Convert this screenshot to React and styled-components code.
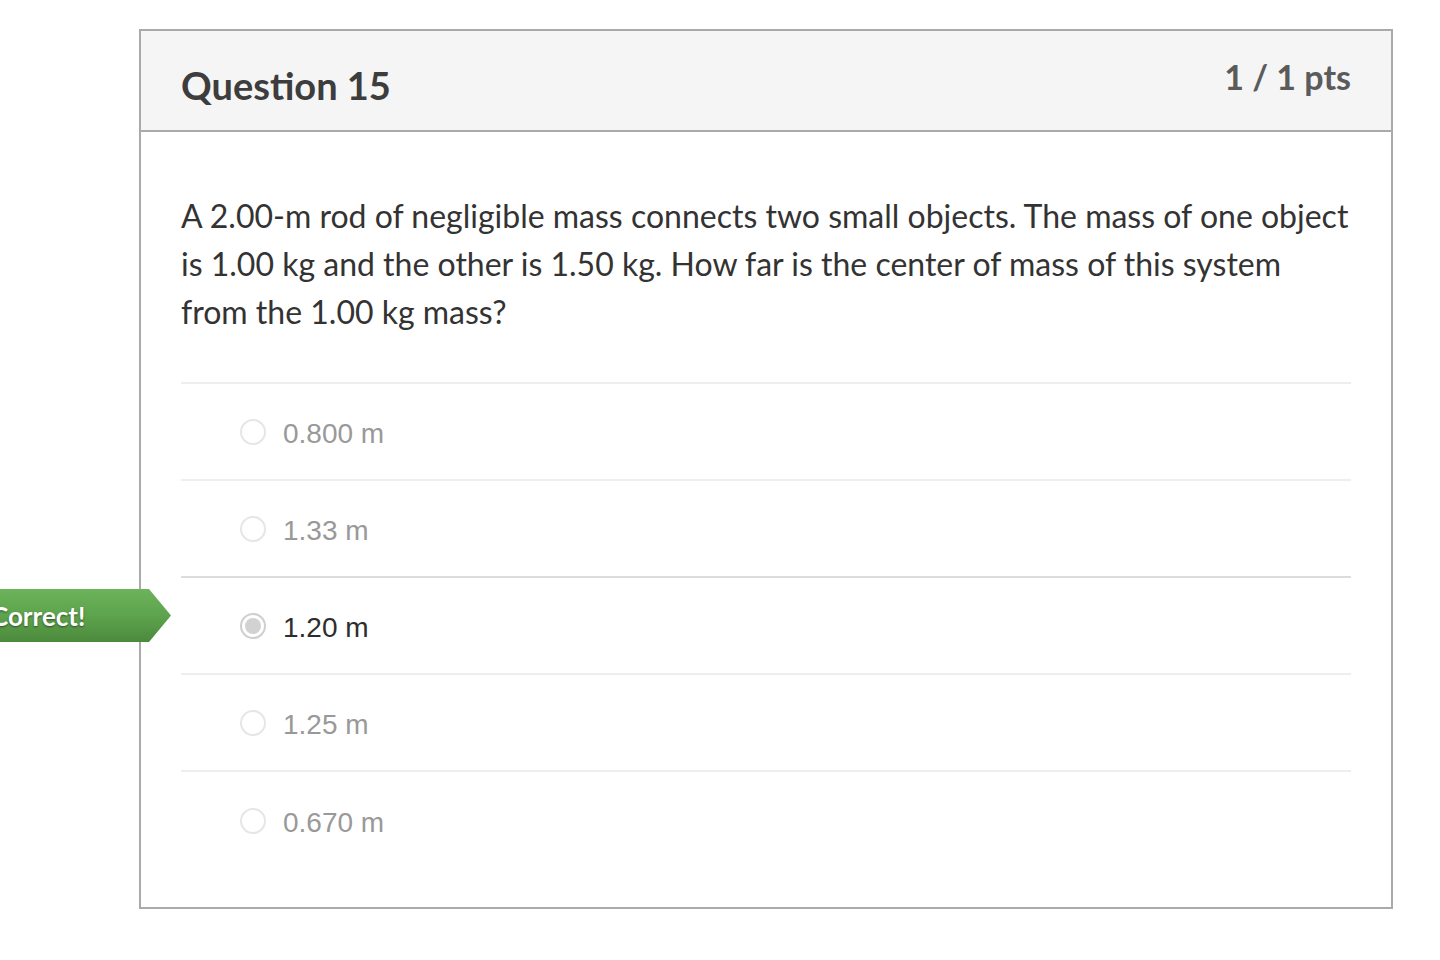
import React from 'react';
import styled, { createGlobalStyle } from 'styled-components';

const GlobalStyle = createGlobalStyle`
  body {
    margin: 0;
    padding: 0;
    background: #fff;
    font-family: Lato, "Noto Sans", sans-serif;
  }
  h1, h2, p {
    margin: 0;
    padding: 0;
  }
`;

const Page = styled.div`
  padding: 29px 0 40px 139px;
  width: 1254px;
`;

const Card = styled.div`
  border: 2px solid #aaaaaa;
  background: #fff;
`;

const Header = styled.div`
  display: flex;
  justify-content: space-between;
  align-items: flex-start;
  background: #f5f5f5;
  border-bottom: 2px solid #aaaaaa;
  padding: 0 40px 0 40px;
  height: 99px;
`;

const Title = styled.h1`
  font-family: Lato, sans-serif;
  font-weight: 700;
  font-size: 38px;
  color: #3d3d3d;
  margin-top: 30px;
  line-height: 48px;
`;

const Points = styled.h2`
  font-family: Lato, sans-serif;
  font-weight: 700;
  font-size: 34px;
  color: #5b5b5b;
  margin-top: 26px;
  line-height: 40px;
`;

const Body = styled.div`
  padding: 60px 40px 38px 40px;
`;

const Text = styled.p`
  font-family: Lato, sans-serif;
  font-size: 32px;
  line-height: 48px;
  color: #333;
  margin-bottom: 46px;
`;

const Answer = styled.div`
  position: relative;
  display: flex;
  align-items: center;
  height: 95px;
  border-top: 2px solid ${p => (p.$dark ? '#dcdcdc' : '#eeeeee')};
  padding-left: 59px;
  gap: 17px;
`;

const Last = styled(Answer)`
  height: 97px;
  border-top: 2px solid #eeeeee;
`;

const Radio = styled.span`
  box-sizing: border-box;
  width: 26px;
  height: 26px;
  border-radius: 50%;
  border: 2px solid ${p => (p.$checked ? '#cfcfcf' : '#e6e6e6')};
  background: #fff;
  display: flex;
  align-items: center;
  justify-content: center;
  &::after {
    content: '';
    display: ${p => (p.$checked ? 'block' : 'none')};
    width: 16px;
    height: 16px;
    border-radius: 50%;
    background: #d2d2d2;
  }
`;

const Label = styled.span`
  font-family: "Liberation Sans", Arial, sans-serif;
  font-size: 28px;
  color: ${p => (p.$checked ? '#2d2d2d' : '#999999')};
  margin-top: 4px;
`;

const Badge = styled.div`
  position: absolute;
  top: 11px;
  right: calc(100% + 10px);
  width: 180px;
  height: 53px;
  box-sizing: border-box;
  padding-left: 0;
  display: flex;
  align-items: center;
  background: linear-gradient(to bottom, #6cb35b 0%, #5ea34d 50%, #4b8a3c 100%);
  clip-path: polygon(0 0, 158px 0, 180px 50%, 158px 100%, 0 100%);
  color: #fff;
  font-family: Lato, sans-serif;
  font-weight: 700;
  font-size: 26px;
  text-shadow: 0 1px 2px rgba(0, 0, 0, 0.5);
`;

const answers = [
  { label: '0.800 m' },
  { label: '1.33 m' },
  { label: '1.20 m', checked: true },
  { label: '1.25 m' },
];

export default function App() {
  return (
    <>
      <GlobalStyle />
      <Page>
        <Card>
          <Header>
            <Title>Question 15</Title>
            <Points>1 / 1 pts</Points>
          </Header>
          <Body>
            <Text>
              A 2.00-m rod of negligible mass connects two small objects. The mass of one object
              is 1.00 kg and the other is 1.50 kg. How far is the center of mass of this system
              from the 1.00 kg mass?
            </Text>
            {answers.map(a => (
              <Answer key={a.label} $dark={a.checked}>
                {a.checked && <Badge>Correct!</Badge>}
                <Radio $checked={a.checked} />
                <Label $checked={a.checked}>{a.label}</Label>
              </Answer>
            ))}
            <Last>
              <Radio />
              <Label>0.670 m</Label>
            </Last>
          </Body>
        </Card>
      </Page>
    </>
  );
}
